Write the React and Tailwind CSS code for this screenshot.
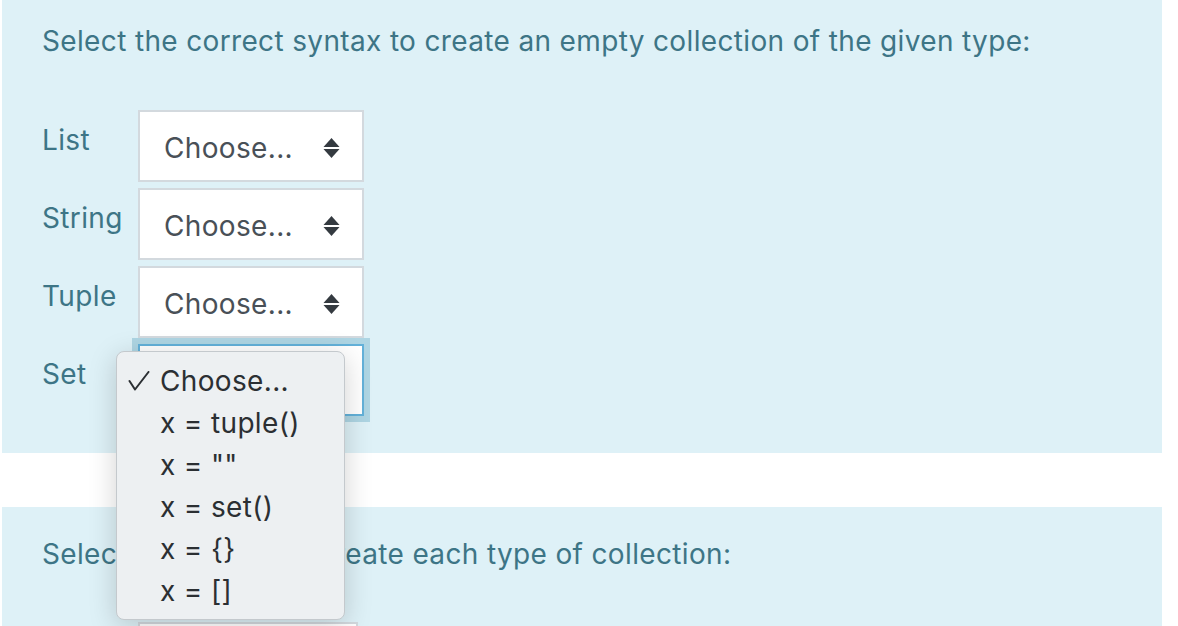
import React from "react";

const font = { fontFamily: "Inter, 'Noto Sans', sans-serif" };

function Arrows() {
  return (
    <svg width="17" height="20" viewBox="0 0 17 20" className="shrink-0">
      <path d="M8.5 0 L16.5 9 L0.5 9 Z" fill="#343a40" />
      <path d="M0.5 11 L16.5 11 L8.5 20 Z" fill="#343a40" />
    </svg>
  );
}

function Check() {
  return (
    <svg width="22" height="20" viewBox="0 0 22 20">
      <path d="M1.5 10 L7 18.5 L20.5 1" fill="none" stroke="#2b2f33" strokeWidth="2" strokeLinecap="round" strokeLinejoin="round" />
    </svg>
  );
}

function Select({ focused, text = "Choose..." }) {
  return (
    <div
      className={
        "w-[226px] h-[72px] bg-white flex items-center pt-1 pl-[24px] pr-[22px] justify-between " +
        (focused
          ? "border-2 border-[#63b1d9] shadow-[0_0_0_6px_#aed5e3]"
          : "border-2 border-[#d3d9de]")
      }
    >
      <span className="text-[28px] leading-[36px] tracking-[0.35px] text-[#495057]">{text}</span>
      {!focused && <Arrows />}
    </div>
  );
}

function Row({ label, focused, blank }) {
  return (
    <div className="flex items-start">
      <div className="w-[96px] mt-[12px] text-[28px] leading-[36px] tracking-[0.35px] text-[#3d7586]">{label}</div>
      <Select focused={focused} text={blank ? "" : "Choose..."} />
    </div>
  );
}

export default function App() {
  const items = ["Choose...", "x = tuple()", 'x = ""', "x = set()", "x = {}", "x = []"];
  return (
    <div className="relative w-[1178px] h-[626px] overflow-hidden bg-white" style={font}>
      <div className="ml-[2px] w-[1160px] bg-[#def1f7] pt-[23px] pb-[37px] pl-[40px]">
        <div className="text-[28px] leading-[36px] text-[#3d7586] tracking-[0.35px] whitespace-nowrap">
          Select the correct syntax to create an empty collection of the given type:
        </div>
        <div className="mt-[51px] flex flex-col gap-[6px]">
          <Row label="List" />
          <Row label="String" />
          <Row label="Tuple" />
          <Row label="Set" focused blank />
        </div>
      </div>
      <div className="ml-[2px] mt-[54px] w-[1160px] h-[200px] bg-[#def1f7] pt-[29px] pl-[40px]">
        <div className="text-[28px] leading-[36px] text-[#3d7586] tracking-[0.35px] whitespace-nowrap">
          Select the syntax to create each type of collection:
        </div>
        <div className="mt-[50px] ml-[96px] w-[220px] h-[72px] bg-white border-2 border-[#d3d9de]" />
      </div>

      <div className="absolute left-[116px] top-[351px] w-[229px] h-[269px] rounded-[8px] bg-[#edf0f2] border border-[#c4c9cd] shadow-[0_6px_28px_rgba(0,0,0,0.18)] pt-[8px]">
        {items.map((it, i) => (
          <div key={i} className="flex items-center h-[42px] text-[28px] tracking-[0.35px] text-[#2b2f33]">
            <span className="w-[43px] pl-[11px] flex items-center">{i === 0 ? <Check /> : null}</span>
            <span className="leading-[36px]">{it}</span>
          </div>
        ))}
      </div>
    </div>
  );
}
